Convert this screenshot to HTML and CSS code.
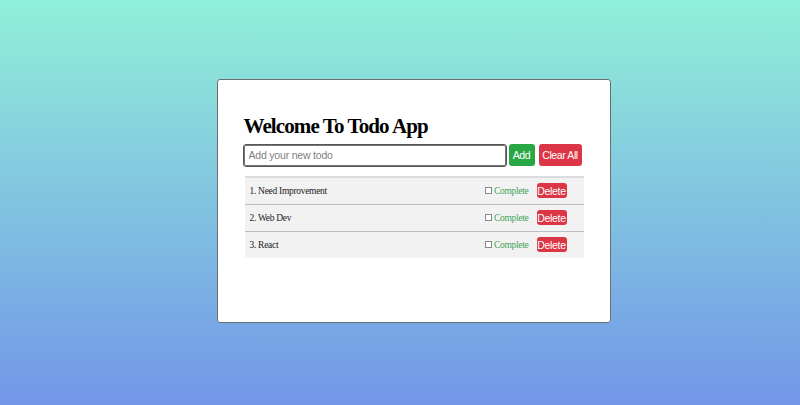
FILE: index.html
```html
<!DOCTYPE html>
<html>
<head>
<meta charset="utf-8">
<link rel="stylesheet" href="styles.css">
</head>
<body>
<div class="page">
  <div class="card">
    <h1 class="title">Welcome To Todo App</h1>
    <div class="form">
      <input class="todo-input" type="text" placeholder="Add your new todo">
      <button class="btn btn-add">Add</button>
      <button class="btn btn-clear">Clear All</button>
    </div>
    <ul class="list">
      <li class="item">
        <span class="item-text">1. Need Improvement</span>
        <span class="complete"><span class="box"></span>Complete</span>
        <button class="btn btn-delete">Delete</button>
      </li>
      <li class="item">
        <span class="item-text">2. Web Dev</span>
        <span class="complete"><span class="box"></span>Complete</span>
        <button class="btn btn-delete">Delete</button>
      </li>
      <li class="item">
        <span class="item-text">3. React</span>
        <span class="complete"><span class="box"></span>Complete</span>
        <button class="btn btn-delete">Delete</button>
      </li>
    </ul>
  </div>
</div>
</body>
</html>
```
FILE: styles.css
```css
html, body {
  margin: 0;
  padding: 0;
}
body {
  height: 405px;
  background: linear-gradient(to bottom, #90f0d8 0%, #7296e8 100%);
  font-family: "Liberation Serif", "Times New Roman", serif;
}
.page {
  height: 405px;
  display: flex;
  align-items: center;
  justify-content: center;
}
.card {
  box-sizing: border-box;
  width: 394px;
  height: 244px;
  margin-left: 27px;
  margin-bottom: 4px;
  background: #fff;
  border: 1px solid #6d6d6d;
  border-radius: 3px;
  padding: 32px 26px 0 25px;
}
.title {
  margin: 0;
  font-size: 21px;
  font-weight: bold;
  line-height: 28px;
  letter-spacing: -0.9px;
  color: #000;
  padding-left: 1px;
}
.form {
  display: flex;
  align-items: center;
  margin-top: 4px;
}
.todo-input {
  box-sizing: border-box;
  width: 264px;
  height: 23px;
  border: 1px solid #555;
  border-radius: 3px;
  padding: 0 5px;
  font-family: "Liberation Sans", Arial, sans-serif;
  font-size: 10.5px;
  letter-spacing: -0.2px;
  outline: none;
  box-shadow: inset 0 0 0 1px #777;
}
.todo-input::placeholder {
  color: #808080;
}
.btn {
  border: none;
  color: #fff;
  font-family: "Liberation Sans", Arial, sans-serif;
  font-size: 10.5px;
  letter-spacing: -0.4px;
  border-radius: 3px;
  padding: 0;
  cursor: pointer;
}
.btn-add {
  background: #28a745;
  width: 26px;
  height: 22px;
  margin-left: 2px;
}
.btn-clear {
  background: #dc3545;
  width: 43px;
  height: 22px;
  margin-left: 4px;
}
.list {
  list-style: none;
  margin: 9px 0 0 2px;
  padding: 0;
  width: 339px;
  border-top: 2px solid #dcdcdc;
}
.item {
  display: flex;
  align-items: center;
  height: 26px;
  background: #f2f2f2;
  padding: 0 17px 0 5px;
  font-size: 9.5px;
  letter-spacing: -0.3px;
  color: #222;
}
.item + .item {
  border-top: 1px solid #bdbdbd;
}
.item-text {
  flex: 1;
}
.complete {
  display: flex;
  align-items: center;
  color: #3fa45a;
  font-size: 9.5px;
  letter-spacing: -0.3px;
}
.box {
  box-sizing: border-box;
  width: 7px;
  height: 7px;
  border: 1px solid #888;
  margin-right: 2px;
  background: #fff;
}
.btn-delete {
  background: #dc3545;
  width: 30px;
  height: 15px;
  margin-left: 8px;
  font-size: 10.5px;
  letter-spacing: -0.3px;
}
```
